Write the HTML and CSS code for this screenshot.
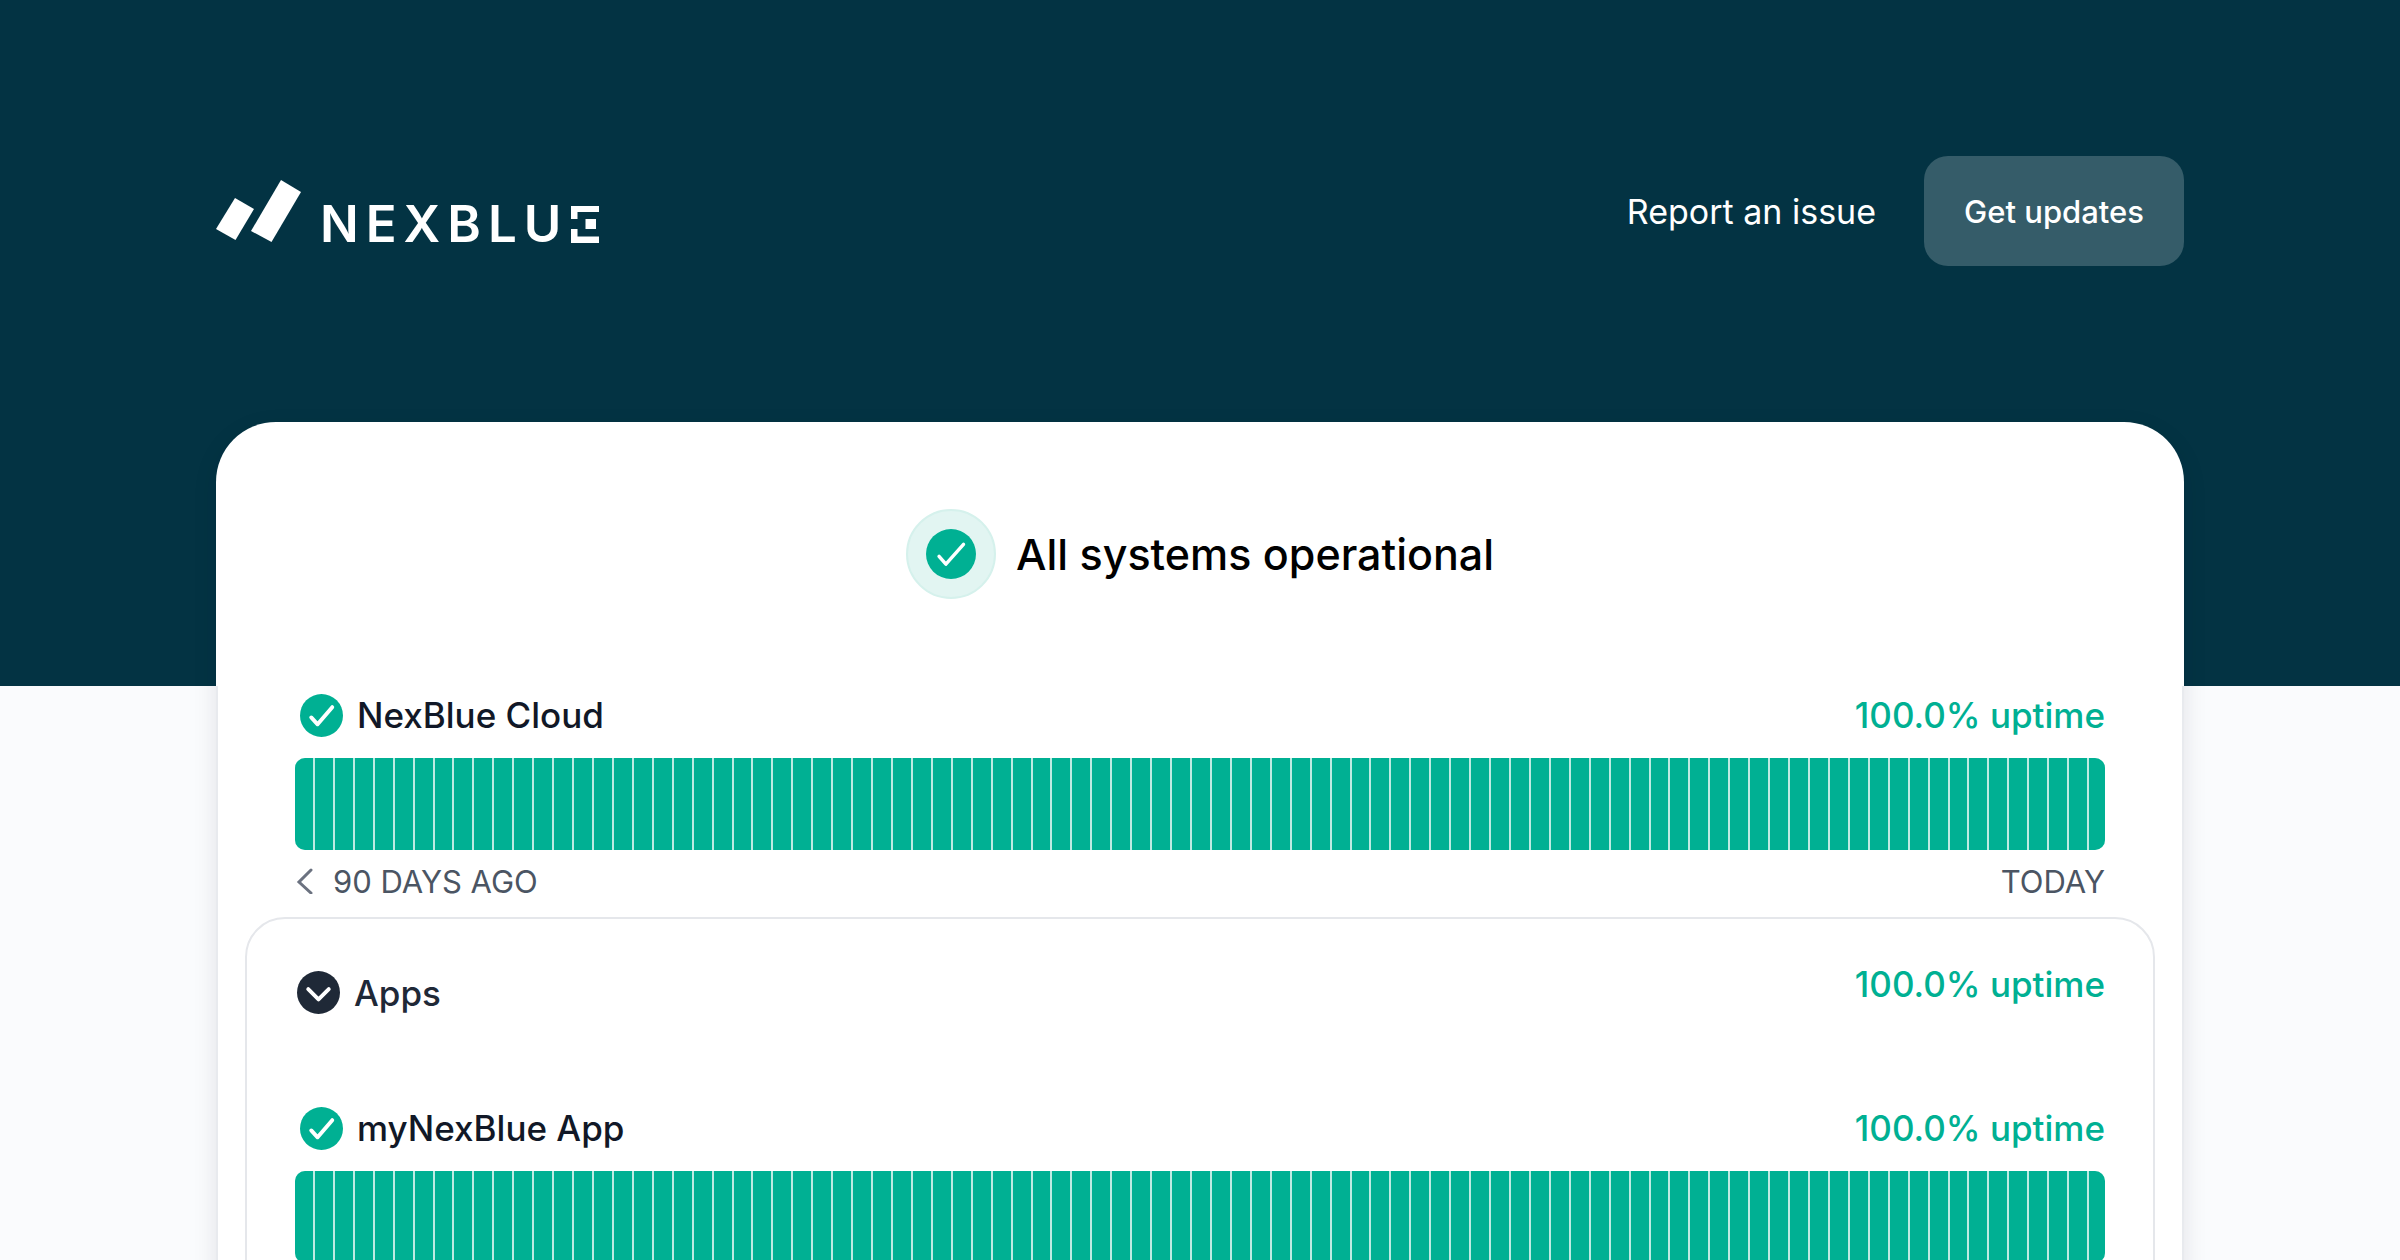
FILE: index.html
```
<!DOCTYPE html>
<html lang="en">

<head>
    <meta charset="UTF-8">
    <meta name="viewport" content="width=device-width, initial-scale=1.0">
    <title>NexBlue Status</title>
    <link rel="stylesheet" href="styles.css">
</head>

<body>
    <div class="page">
        <header class="header">
            <a class="logo" href="#" aria-label="NexBlue">
                <svg class="logo-mark" viewBox="0 0 86 64" width="86" height="64" fill="#fff">
                    <path d="M19 19 38 30 19.500 61 0 50Z" />
                    <path d="M65 1 85 13 55.500 63 35 52Z" />
                </svg>
                <span class="logo-text">NEXBLU</span>
                <svg class="logo-end" viewBox="0 0 30 38" width="30" height="38" fill="#fff">
                    <path d="M1 1h28v6H7.500v7H1Z" />
                    <path d="M15.500 14H26v10H15.500Z" />
                    <path d="M1 24h6.500v7.500H29V38H1Z" />
                </svg>
            </a>
            <nav class="nav">
                <a class="report" href="#">Report an issue</a>
                <button class="updates" type="button">Get updates</button>
            </nav>
        </header>

        <main class="card">
            <div class="status">
                <span class="status-badge">
                    <svg viewBox="0 0 44 44" width="50" height="50">
                        <circle cx="22" cy="22" r="22" fill="#00b093" />
                        <path class="tick" d="M11.500 24 17.500 31 33 13.500" />
                    </svg>
                </span>
                <h1>All systems operational</h1>
            </div>

            <section class="service">
                <div class="service-head">
                    <h2 class="service-name">
                        <svg viewBox="0 0 44 44" width="43" height="43">
                            <circle cx="22" cy="22" r="22" fill="#00b093" />
                            <path class="tick" d="M11.500 24 18 31 33 13.500" />
                        </svg>
                        NexBlue Cloud
                    </h2>
                    <span class="uptime">100.0% uptime</span>
                </div>
                <div class="days"><div class="days-grid"></div></div>
                <div class="range">
                    <button class="range-prev" type="button">
                        <svg viewBox="0 0 18 26" width="18" height="26">
                            <path d="M16 2 4 14 16 25" />
                        </svg>
                        90 DAYS AGO
                    </button>
                    <span>TODAY</span>
                </div>
            </section>

            <section class="group">
                <div class="group-head">
                    <button class="group-toggle" type="button" aria-expanded="true">
                        <svg viewBox="0 0 44 44" width="43" height="43">
                            <circle cx="22" cy="22" r="22" fill="#1f2937" />
                            <path class="tick" d="M11.500 18.500 22 29 32.500 18.500" />
                        </svg>
                        Apps
                    </button>
                    <span class="uptime">100.0% uptime</span>
                </div>

                <div class="service">
                    <div class="service-head">
                        <h2 class="service-name">
                            <svg viewBox="0 0 44 44" width="43" height="43">
                                <circle cx="22" cy="22" r="22" fill="#00b093" />
                                <path class="tick" d="M11.500 24 18 31 33 13.500" />
                            </svg>
                            myNexBlue App
                        </h2>
                        <span class="uptime">100.0% uptime</span>
                    </div>
                    <div class="days"><div class="days-grid"></div></div>
                </div>
            </section>
        </main>
    </div>

    <script>
        // One bar per day, today included
        document.querySelectorAll(".days-grid").forEach(grid => {
            for (let i = 0; i < 91; i++) {
                const day = document.createElement("span");
                day.className = "day";
                grid.appendChild(day);
            }
        });
    </script>
</body>

</html>
```
FILE: styles.css
```
* {
    margin: 0;
    padding: 0;
    box-sizing: border-box;
}

body {
    font-family: Inter, "Liberation Sans", sans-serif;
    background: #fafbfd;
    color: #111827;
}

svg {
    display: block;
    flex-shrink: 0;
}

button {
    font-family: inherit;
    border: none;
    background: none;
    cursor: pointer;
}

.page {
    height: 100vh;
    overflow: hidden;
    padding: 0 9%;
    background: linear-gradient(#033343 686px, transparent 686px);
}

/* Header */
.header {
    display: flex;
    justify-content: space-between;
    align-items: center;
    height: 422px;
}

.logo {
    display: flex;
    align-items: flex-end;
    color: #fff;
    text-decoration: none;
}

.logo-text {
    margin-left: 18px;
    font-size: 51px;
    font-weight: 600;
    line-height: 38px;
    letter-spacing: 7px;
}

.logo-end {
    margin-left: 2px;
}

.nav {
    display: flex;
    align-items: center;
    gap: 48px;
}

.report {
    color: #fff;
    font-size: 34px;
    text-decoration: none;
}

.updates {
    height: 110px;
    padding: 0 40px;
    border-radius: 24px;
    background: #355c69;
    color: #fff;
    font-size: 31px;
    font-weight: 500;
}

/* Card */
.card {
    min-height: 100vh;
    padding: 85px 27px 0;
    border: 2px solid transparent;
    border-radius: 60px;
    /* the border only shows below the dark band */
    background:
        linear-gradient(#fff, #fff) padding-box,
        linear-gradient(#fff 264px, #e8eaee 264px) border-box;
    box-shadow: 0 8px 24px rgba(17, 24, 39, 0.1);
}

.status {
    display: flex;
    justify-content: center;
    align-items: center;
    gap: 20px;
    margin-bottom: 88px;
    color: #000;
}

.status-badge {
    display: grid;
    place-items: center;
    width: 90px;
    height: 90px;
    border: 2px solid #d5f1ec;
    border-radius: 50%;
    background: #e2f5f2;
}

.status h1 {
    font-size: 43px;
    font-weight: 500;
}

.tick {
    fill: none;
    stroke: #fff;
    stroke-width: 4;
    stroke-linecap: round;
    stroke-linejoin: round;
}

.status-badge .tick {
    stroke-width: 3;
}

/* Service */
.service {
    padding: 0 50px;
}

.service-head {
    display: flex;
    justify-content: space-between;
    align-items: center;
    height: 56px;
    margin-bottom: 15px;
}

.service-name {
    display: flex;
    align-items: center;
    gap: 14px;
    padding-left: 5px;
    font-size: 35px;
    font-weight: 500;
}

.uptime {
    color: #00b093;
    font-size: 35px;
    font-weight: 500;
}

.days {
    overflow: hidden;
    border-radius: 10px;
    background: #bcebe2;
}

.days-grid {
    display: grid;
    grid-template-columns: repeat(91, 1fr);
    gap: 2px;
    height: 92px;
    margin-right: -2px;
}

.day {
    background: #00b093;
}

.range {
    display: flex;
    justify-content: space-between;
    align-items: center;
    height: 62px;
    margin-bottom: 5px;
    color: #4b5563;
    font-size: 31px;
}

.range-prev {
    display: flex;
    align-items: center;
    gap: 20px;
    color: inherit;
    font-size: inherit;
}

.range-prev svg {
    fill: none;
    stroke: #6b7280;
    stroke-width: 3;
    stroke-linecap: round;
}

/* Group */
.group {
    padding: 38px 0;
    border: 2px solid #e5e7eb;
    border-radius: 40px;
}

.group .service {
    padding: 0 48px;
}

.group-head {
    display: flex;
    justify-content: space-between;
    align-items: flex-start;
    height: 143px;
    padding: 6px 48px 0;
}

.group-toggle {
    display: flex;
    align-items: center;
    gap: 14px;
    padding: 8px 0 0 2px;
    color: #1f2937;
    font-size: 35px;
    font-weight: 500;
}
```
